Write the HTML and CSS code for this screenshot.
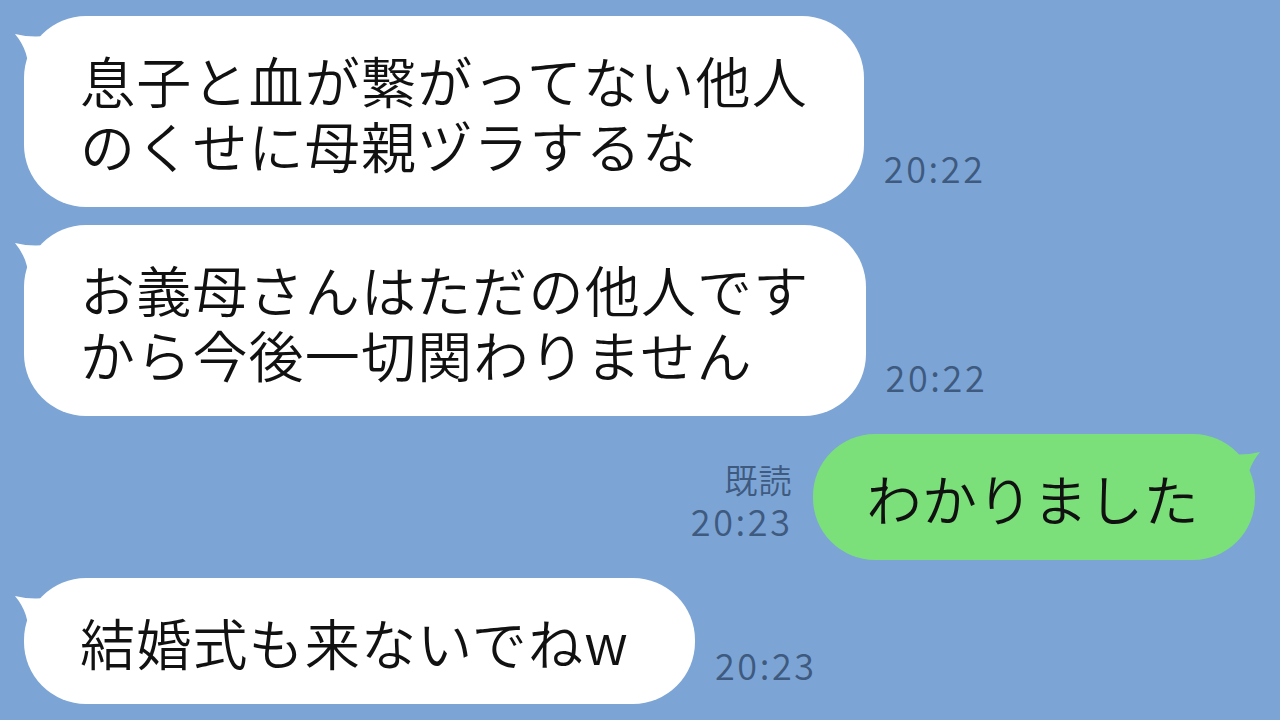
FILE: index.html
```html
<!DOCTYPE html>
<html>

<head>
  <title>トーク</title>
  <link rel="stylesheet" href="styles.css">
</head>

<body>

  <div class="chat">

    <div class="row left">
      <div class="bubble">
        <svg class="tail" width="60" height="60" viewBox="0 0 60 60"><path d="M15 20 Q40 26 60 18 L60 60 L28 60 Q30 38 15 20 Z" /></svg>
        <p>息子と血が繋がってない他人<br />のくせに母親ヅラするな</p>
      </div>
      <div class="meta">
        <span>20:22</span>
      </div>
    </div>

    <div class="row left">
      <div class="bubble">
        <svg class="tail" width="60" height="60" viewBox="0 0 60 60"><path d="M15 20 Q40 26 60 18 L60 60 L28 60 Q30 38 15 20 Z" /></svg>
        <p>お義母さんはただの他人です<br />から今後一切関わりません</p>
      </div>
      <div class="meta">
        <span>20:22</span>
      </div>
    </div>

    <div class="row right">
      <div class="meta">
        <span class="read">既読</span>
        <span>20:23</span>
      </div>
      <div class="bubble green">
        <svg class="tail" width="60" height="60" viewBox="0 0 60 60"><path d="M45 20 Q20 26 0 18 L0 60 L32 60 Q30 38 45 20 Z" /></svg>
        <p>わかりました</p>
      </div>
    </div>

    <div class="row left">
      <div class="bubble short">
        <svg class="tail" width="60" height="60" viewBox="0 0 60 60"><path d="M15 20 Q40 26 60 18 L60 60 L28 60 Q30 38 15 20 Z" /></svg>
        <p>結婚式も来ないでねw</p>
      </div>
      <div class="meta">
        <span>20:23</span>
      </div>
    </div>

  </div>

</body>

</html>
```

FILE: styles.css
```css
body {
  margin: 0;
  width: 1280px;
  height: 720px;
  overflow: hidden;
  background: #7ca5d6;
  font-family: "Noto Sans CJK JP", "Noto Sans", sans-serif;
}

.chat {
  display: flex;
  flex-direction: column;
  gap: 18px;
  padding: 16px 25px 0 24px;
}

.row { display: flex; align-items: flex-end; gap: 20px; }
.row.right { justify-content: flex-end; }

.bubble {
  position: relative;
  background: #fff;
  border-radius: 62px;
  padding: 31px 56px 30px;
}
.bubble p {
  position: relative;
  margin: 0;
  font-size: 55px;
  font-weight: 350;
  letter-spacing: 1.2px;
  line-height: 65px;
  color: #111;
  white-space: nowrap;
}
.bubble .tail { position: absolute; top: -2px; left: -24px; fill: #fff; }
.bubble.short { padding-right: 66px; }

.bubble.green { background: #7be07a; padding: 31px 56px 30px 54px; }
.bubble.green p { letter-spacing: 0.4px; }
.bubble.green .tail { left: auto; right: -20px; fill: #7be07a; }

.meta {
  display: flex;
  flex-direction: column;
  align-items: flex-end;
  padding-bottom: 20px;
  color: #3f5a7f;
  font-size: 36px;
  font-weight: 350;
  letter-spacing: 2.6px;
  line-height: 40px;
}
.row.right .meta { padding-bottom: 20px; }
.meta .read { font-size: 33px; letter-spacing: 1px; line-height: 42px; }
```
